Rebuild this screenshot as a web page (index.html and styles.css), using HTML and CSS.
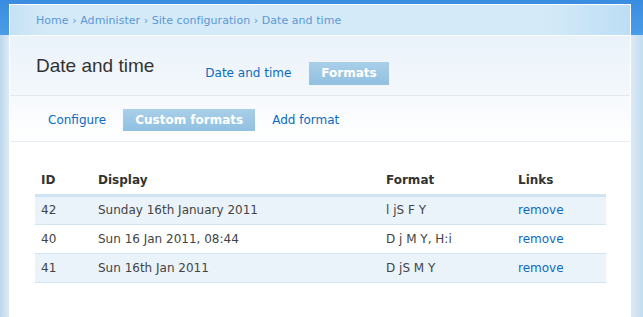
FILE: index.html
```html
<!DOCTYPE html>
<html lang="en">
<head>
    <meta charset="UTF-8">
    <title>Date and time</title>
    <link rel="stylesheet" href="styles.css">
</head>
<body>
    <div class="page">
        <div class="panel">
            <div class="breadcrumb">
                <a href="#">Home</a> › <a href="#">Administer</a> › <a href="#">Site configuration</a> › <a href="#">Date and time</a>
            </div>
            <div class="header">
                <h1 class="title">Date and time</h1>
                <ul class="tabs primary">
                    <li><a href="#">Date and time</a></li>
                    <li class="active"><a href="#">Formats</a></li>
                </ul>
            </div>
            <ul class="tabs secondary">
                <li><a href="#">Configure</a></li>
                <li class="active"><a href="#">Custom formats</a></li>
                <li><a href="#">Add format</a></li>
            </ul>
            <div class="content">
                <table class="formats">
                    <thead>
                        <tr>
                            <th class="col-id">ID</th>
                            <th class="col-display">Display</th>
                            <th class="col-format">Format</th>
                            <th>Links</th>
                        </tr>
                    </thead>
                    <tbody>
                        <tr class="odd">
                            <td>42</td>
                            <td>Sunday 16th January 2011</td>
                            <td>l jS F Y</td>
                            <td><a href="#">remove</a></td>
                        </tr>
                        <tr class="even">
                            <td>40</td>
                            <td>Sun 16 Jan 2011, 08:44</td>
                            <td>D j M Y, H:i</td>
                            <td><a href="#">remove</a></td>
                        </tr>
                        <tr class="odd">
                            <td>41</td>
                            <td>Sun 16th Jan 2011</td>
                            <td>D jS M Y</td>
                            <td><a href="#">remove</a></td>
                        </tr>
                    </tbody>
                </table>
            </div>
        </div>
    </div>
</body>
</html>
```

FILE: styles.css
```css
* {
    margin: 0;
    padding: 0;
    box-sizing: border-box;
}
body {
    font-family: 'DejaVu Sans', Verdana, sans-serif;
    font-size: 12px;
    color: #444;
    height: 317px;
    overflow: hidden;
    background:
        linear-gradient(to bottom, #3a8ce0 0, #4a9de8 35px, transparent 35px),
        linear-gradient(to right, #bcd7eb 0, #dbeaf5 9px, #eef5fb 50%, #d9e9f5 632px, #c3dcef 643px);
}
a {
    color: #0b6bc2;
    text-decoration: none;
}
.page {
    padding: 4px 0 0 9px;
}
.panel {
    width: 622px;
    height: 320px;
    background: #fff;
    border: 1px solid #fff;
    border-bottom: none;
}
.breadcrumb {
    height: 31px;
    padding: 9px 0 0 26px;
    font-size: 11px;
    letter-spacing: 0.05px;
    color: #5d9bd6;
    background: linear-gradient(to right, #c6e1f5 0, #d5eaf8 6%, #d5eaf8 86%, #bcdef5 100%);
    border-bottom: 1px solid #fff;
}
.breadcrumb a {
    color: #5a98d5;
}
.header {
    display: flex;
    align-items: flex-end;
    height: 60px;
    padding: 0 0 10px 26px;
    background: linear-gradient(to bottom, #eaf2fa, #f4f8fc);
    border-bottom: 1px solid #e1e9f1;
}
.title {
    font-family: 'Liberation Sans', Arial, sans-serif;
    font-weight: normal;
    font-size: 19px;
    color: #333;
    margin: 0 39px 8px 0;
}
.tabs {
    display: flex;
    list-style: none;
    gap: 17px;
}
.tabs li a {
    display: block;
    height: 23px;
    line-height: 23px;
    padding: 0 12px;
}
.tabs li.active a {
    color: #fff;
    font-weight: bold;
    background: linear-gradient(to bottom, #a9cfe8, #91c0e1);
}
.primary {
    gap: 6px;
}
.secondary {
    height: 46px;
    padding: 13px 0 0 26px;
    background: linear-gradient(to bottom, #f6f9fd, #fff);
    border-bottom: 1px solid #e6edf3;
    gap: 5px;
}
.secondary li a {
    height: 22px;
    line-height: 22px;
}
.content {
    padding: 25px 25px 0 25px;
}
.formats {
    width: 571px;
    border-collapse: collapse;
}
.formats th {
    text-align: left;
    color: #333;
    font-weight: bold;
    height: 28px;
    padding: 0 6px 1px 6px;
    border-bottom: 3px solid #d0e3f3;
}
.formats td {
    height: 29px;
    padding: 0 6px;
    border-bottom: 1px solid #d3e5f4;
}
.formats tr.odd td {
    background: #ebf3fa;
}
.col-id {
    width: 57px;
}
.col-display {
    width: 288px;
}
.col-format {
    width: 132px;
}
```
